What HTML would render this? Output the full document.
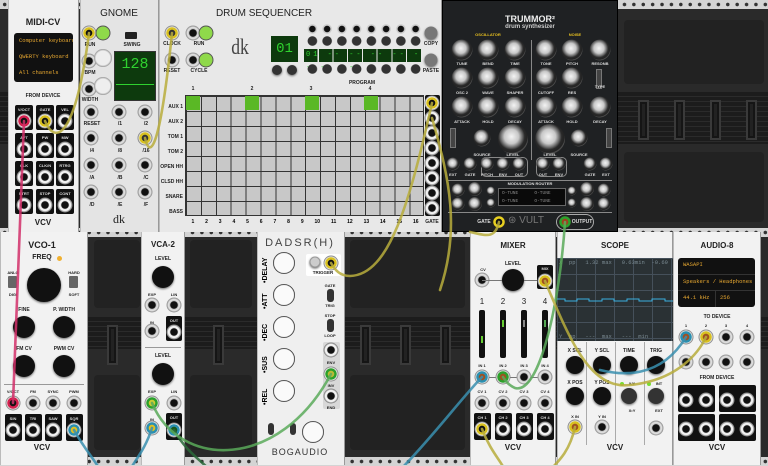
<!DOCTYPE html>
<html><head><meta charset="utf-8"><style>
*{box-sizing:border-box;margin:0;padding:0}
body{width:768px;height:465px;overflow:hidden;background:#2a2a2a;position:relative;font-family:"Liberation Sans",sans-serif}
.a{position:absolute}
.rail{position:absolute;left:0;width:768px;height:9px;background:#d4d4d4 radial-gradient(circle,#333 1.6px,transparent 2px) 0 0/9.4px 9px repeat-x}
.band{position:absolute;background:#1c1c1c repeating-linear-gradient(#1c1c1c 0 4px,#2b2b2b 4px 5px)}
.conn{position:absolute;width:11px;height:40px;background:#222;border:2px solid #3a3a3a;box-shadow:inset 0 0 0 2px #151515}
.p{position:absolute;background:#eeeeee;border-left:1px solid #bbb;border-right:1px solid #999}
.t{position:absolute;transform:translateX(-50%);white-space:nowrap;color:#222;text-align:center}
.j{position:absolute;width:15px;height:15px;border-radius:50%;background:radial-gradient(circle,#111 0 3.5px,#bbb 4px,#e8e8e8 5.5px,#999 7px);transform:translate(-50%,-50%)}
.jb{position:absolute;width:15px;height:15px;border-radius:50%;background:radial-gradient(circle,#111 0 3.5px,#ddd 4px,#fff 5.5px,#888 7px);transform:translate(-50%,-50%)}
.box{position:absolute;background:#111;border-radius:2px}
.kb{position:absolute;border-radius:50%;background:#111;box-shadow:0 1px 2px #666;transform:translate(-50%,-50%)}
.kw{position:absolute;border-radius:50%;background:radial-gradient(circle,#fafafa 0 62%,#333 68%,#111 100%);transform:translate(-50%,-50%)}
.kd{position:absolute;border-radius:50%;background:radial-gradient(circle at 45% 42%,#f4f4f4 0,#c8c8c8 30%,#666 46%,#2a2a2a 55%,#222 66%,#555 70%,#1a1a1a 76%);transform:translate(-50%,-50%)}
.gb{position:absolute;width:15px;height:15px;border-radius:50%;background:#8fd94a;border:1px solid #555;transform:translate(-50%,-50%)}
.s{font-size:5px;font-weight:bold}
.wl{color:#ddd}
</style></head><body>
<div class="rail" style="top:0"></div>
<div class="rail" style="top:228px"></div>
<div class="rail" style="top:457px"></div>
<div class="band" style="left:618px;top:92px;width:150px;height:52px"></div>
<div class="conn" style="left:638px;top:100px"></div><div class="conn" style="left:674px;top:100px"></div><div class="conn" style="left:710px;top:100px"></div><div class="conn" style="left:746px;top:100px"></div>
<div class="band" style="left:0;top:92px;width:8px;height:52px"></div>
<div class="band" style="left:88px;top:317px;width:682px;height:32px"></div>
<div class="conn" style="left:107px;top:325px"></div><div class="conn" style="left:213px;top:325px"></div><div class="conn" style="left:360px;top:325px"></div><div class="conn" style="left:400px;top:325px"></div><div class="conn" style="left:440px;top:325px"></div>
<div class="a" style="left:94px;top:240px;width:46px;height:68px;background:#222;border-radius:4px"></div>
<div class="a" style="left:94px;top:375px;width:46px;height:75px;background:#222;border-radius:4px"></div>
<div class="a" style="left:190px;top:240px;width:62px;height:68px;background:#222;border-radius:4px"></div>
<div class="a" style="left:190px;top:375px;width:62px;height:75px;background:#222;border-radius:4px"></div>
<div class="a" style="left:350px;top:240px;width:115px;height:68px;background:#222;border-radius:4px"></div>
<div class="a" style="left:350px;top:375px;width:115px;height:75px;background:#222;border-radius:4px"></div>
<div class="a" style="left:624px;top:20px;width:140px;height:64px;background:#222;border-radius:4px"></div>
<div class="a" style="left:624px;top:152px;width:140px;height:70px;background:#222;border-radius:4px"></div>

<!-- MIDI-CV -->
<div class="p" style="left:8px;top:0;width:71px;height:232px;background:#f0f0f0"></div>
<div class="t" style="left:43px;top:17px;font-size:9px;font-weight:bold">MIDI-CV</div>
<div class="a" style="left:14px;top:33px;width:59px;height:49px;background:#111;border-radius:3px;font-family:'Liberation Mono',monospace;font-size:5.5px;color:#e8a830;line-height:16px;padding-left:5px;overflow:hidden;white-space:nowrap">Computer keyboard<br>QWERTY keyboard<br>All channels</div>
<div class="t s" style="left:43px;top:93px">FROM DEVICE</div>
<div class="box" style="left:15px;top:105px;width:18px;height:25px"></div><div class="box" style="left:36px;top:105px;width:18px;height:25px"></div><div class="box" style="left:56px;top:105px;width:18px;height:25px"></div>
<div class="box" style="left:15px;top:133px;width:18px;height:25px"></div><div class="box" style="left:36px;top:133px;width:18px;height:25px"></div><div class="box" style="left:56px;top:133px;width:18px;height:25px"></div>
<div class="box" style="left:15px;top:161px;width:18px;height:25px"></div><div class="box" style="left:36px;top:161px;width:18px;height:25px"></div><div class="box" style="left:56px;top:161px;width:18px;height:25px"></div>
<div class="box" style="left:15px;top:189px;width:18px;height:25px"></div><div class="box" style="left:36px;top:189px;width:18px;height:25px"></div><div class="box" style="left:56px;top:189px;width:18px;height:25px"></div>
<div class="t s wl" style="left:24px;top:107px;font-size:4px">V/OCT</div><div class="t s wl" style="left:45px;top:107px;font-size:4px">GATE</div><div class="t s wl" style="left:65px;top:107px;font-size:4px">VEL</div>
<div class="t s wl" style="left:24px;top:135px;font-size:4px">AFT</div><div class="t s wl" style="left:45px;top:135px;font-size:4px">PW</div><div class="t s wl" style="left:65px;top:135px;font-size:4px">MW</div>
<div class="t s wl" style="left:24px;top:163px;font-size:4px">CLK</div><div class="t s wl" style="left:45px;top:163px;font-size:4px">CLK/N</div><div class="t s wl" style="left:65px;top:163px;font-size:4px">RTRG</div>
<div class="t s wl" style="left:24px;top:191px;font-size:4px">STRT</div><div class="t s wl" style="left:45px;top:191px;font-size:4px">STOP</div><div class="t s wl" style="left:65px;top:191px;font-size:4px">CONT</div>
<div class="jb" style="left:24px;top:121px;background:radial-gradient(circle,#111 0 3px,#d2204e 3.5px 5.5px,#fff 6px,#888 7px)"></div><div class="jb" style="left:45px;top:121px;background:radial-gradient(circle,#111 0 3px,#d8c020 3.5px 5.5px,#fff 6px,#888 7px)"></div><div class="jb" style="left:65px;top:121px"></div>
<div class="jb" style="left:24px;top:149px"></div><div class="jb" style="left:45px;top:149px"></div><div class="jb" style="left:65px;top:149px"></div>
<div class="jb" style="left:24px;top:177px"></div><div class="jb" style="left:45px;top:177px"></div><div class="jb" style="left:65px;top:177px"></div>
<div class="jb" style="left:24px;top:205px"></div><div class="jb" style="left:45px;top:205px"></div><div class="jb" style="left:65px;top:205px"></div>
<div class="t" style="left:43px;top:218px;font-size:8px;font-weight:bold">VCV</div>

<!-- GNOME -->
<div class="p" style="left:80px;top:0;width:79px;height:232px;background:#e4e4e4"></div>
<div class="t" style="left:119px;top:8px;font-size:10px">GNOME</div>
<div class="j" style="left:89px;top:33px;background:radial-gradient(circle,#111 0 3px,#d8c020 3.5px 5.5px,#eee 6px,#888 7px)"></div><div class="gb" style="left:103px;top:33px"></div>
<div class="t s" style="left:90px;top:42px">RUN</div>
<div class="a" style="left:125px;top:32px;width:12px;height:7px;background:#222;border-radius:1px"></div>
<div class="t s" style="left:132px;top:42px">SWING</div>
<div class="a" style="left:114px;top:51px;width:42px;height:50px;background:#0d3a0d;border:1px solid #333;color:#2fd22f;font-family:'Liberation Mono',monospace;font-size:15px;text-align:center;padding-top:4px">128</div>
<div class="a" style="left:116px;top:84px;width:38px;height:14px;border-top:1px solid #2fd22f"></div>
<div class="j" style="left:89px;top:61px"></div><div class="kw" style="left:103px;top:58px;width:18px;height:18px;background:radial-gradient(circle,#eee 0 55%,#999 70%,#555 100%)"></div>
<div class="t s" style="left:90px;top:70px">BPM</div>
<div class="j" style="left:89px;top:89px"></div><div class="kw" style="left:103px;top:86px;width:18px;height:18px;background:radial-gradient(circle,#eee 0 55%,#999 70%,#555 100%)"></div>
<div class="t s" style="left:90px;top:97px">WIDTH</div>
<div class="j" style="left:91px;top:112px"></div><div class="j" style="left:119px;top:112px"></div><div class="j" style="left:145px;top:112px"></div>
<div class="t s" style="left:92px;top:121px">RESET</div><div class="t s" style="left:120px;top:121px">/1</div><div class="t s" style="left:146px;top:121px">/2</div>
<div class="j" style="left:91px;top:138px"></div><div class="j" style="left:119px;top:138px"></div><div class="j" style="left:145px;top:138px;background:radial-gradient(circle,#333 0 3px,#d8c020 3.5px 5.5px,#eee 6px,#888 7px)"></div>
<div class="t s" style="left:92px;top:148px">/4</div><div class="t s" style="left:120px;top:148px">/8</div><div class="t s" style="left:146px;top:148px">/16</div>
<div class="j" style="left:91px;top:165px"></div><div class="j" style="left:119px;top:165px"></div><div class="j" style="left:145px;top:165px"></div>
<div class="t s" style="left:92px;top:175px">/A</div><div class="t s" style="left:120px;top:175px">/B</div><div class="t s" style="left:146px;top:175px">/C</div>
<div class="j" style="left:91px;top:192px"></div><div class="j" style="left:119px;top:192px"></div><div class="j" style="left:145px;top:192px"></div>
<div class="t s" style="left:92px;top:202px">/D</div><div class="t s" style="left:120px;top:202px">/E</div><div class="t s" style="left:146px;top:202px">/F</div>
<div class="t" style="left:119px;top:212px;font-size:12px;font-family:'Liberation Serif',serif">dk</div>

<!-- DRUM SEQUENCER -->
<div class="p" style="left:159px;top:0;width:283px;height:232px;background:#e8e8e8"></div>
<div class="t" style="left:264px;top:8px;font-size:10px">DRUM SEQUENCER</div>
<div class="j" style="left:172px;top:33px;background:radial-gradient(circle,#333 0 3px,#d8c020 3.5px 5.5px,#eee 6px,#888 7px)"></div><div class="t s" style="left:172px;top:41px">CLOCK</div>
<div class="j" style="left:193px;top:33px"></div><div class="gb" style="left:206px;top:33px"></div><div class="t s" style="left:199px;top:41px">RUN</div>
<div class="j" style="left:172px;top:60px"></div><div class="t s" style="left:172px;top:68px">RESET</div>
<div class="j" style="left:193px;top:60px"></div><div class="gb" style="left:206px;top:60px"></div><div class="t s" style="left:199px;top:68px">CYCLE</div>
<div class="t" style="left:240px;top:34px;font-size:22px;font-family:'Liberation Serif',serif;color:#444;transform:translateX(-50%) scaleX(0.8)">dk</div>
<div class="a" style="left:271px;top:36px;width:27px;height:26px;background:#0d3a0d;color:#2fd22f;font-family:'Liberation Mono',monospace;font-size:14px;text-align:center;line-height:26px">01</div>
<div class="kb" style="left:277px;top:70px;width:10px;height:10px;background:#333"></div><div class="kb" style="left:292px;top:70px;width:10px;height:10px;background:#333"></div>
<div class="a" style="left:304px;top:49px;width:118px;height:13px;background:repeating-linear-gradient(90deg,#0d3a0d 0 13.5px,#e8e8e8 13.5px 14.75px);color:#2fd22f;font-family:'Liberation Mono',monospace;font-size:7px;line-height:13px;letter-spacing:3px;padding-left:2px">01 -- -- -- -- -- -- --</div>
<div class="a" style="left:305px;top:24px;width:117px;height:10px;background:radial-gradient(circle,#111 0 3px,#ccc 3.5px 4.5px,transparent 5px) 0 0/14.75px 10px repeat-x"></div>
<div class="a" style="left:305px;top:36px;width:117px;height:10px;background:radial-gradient(circle,#333 0 4.5px,transparent 5px) 0 0/14.75px 10px repeat-x"></div>
<div class="a" style="left:305px;top:64px;width:117px;height:10px;background:radial-gradient(circle,#333 0 4.5px,transparent 5px) 0 0/14.75px 10px repeat-x"></div>
<div class="t s" style="left:362px;top:80px">PROGRAM</div>
<div class="kb" style="left:431px;top:33px;width:13px;height:13px;background:#777"></div><div class="t s" style="left:431px;top:41px">COPY</div>
<div class="kb" style="left:431px;top:60px;width:13px;height:13px;background:#777"></div><div class="t s" style="left:431px;top:68px">PASTE</div>
<div class="t s" style="left:193px;top:86px">1</div><div class="t s" style="left:252px;top:86px">2</div><div class="t s" style="left:311px;top:86px">3</div><div class="t s" style="left:370px;top:86px">4</div>
<div class="a" style="left:185px;top:95px;width:239px;height:121px;background:#c8c8c8;border:1px solid #333;background-image:repeating-linear-gradient(90deg,#333 0 1px,transparent 1px 14.9px),repeating-linear-gradient(#333 0 1px,transparent 1px 15px)"></div>
<div class="a" style="left:186px;top:96px;width:14px;height:14px;background:#5ab825"></div>
<div class="a" style="left:245px;top:96px;width:14px;height:14px;background:#5ab825"></div>
<div class="a" style="left:305px;top:96px;width:14px;height:14px;background:#5ab825"></div>
<div class="a" style="left:364px;top:96px;width:14px;height:14px;background:#5ab825"></div>
<div class="a s" style="left:160px;top:100px;width:23px;text-align:right;line-height:15px;font-size:5px;color:#222">AUX 1<br>AUX 2<br>TOM 1<br>TOM 2<br>OPEN HH<br>CLSD HH<br>SNARE<br>BASS</div>
<div class="a s" style="left:186px;top:219px;width:238px;display:flex;justify-content:space-around;font-size:5px"><span>1</span><span>2</span><span>3</span><span>4</span><span>5</span><span>6</span><span>7</span><span>8</span><span>9</span><span>10</span><span>11</span><span>12</span><span>13</span><span>14</span><span>15</span><span>16</span></div>
<div class="box" style="left:425px;top:95px;width:15px;height:121px"></div>
<div class="jb" style="left:432px;top:103px;background:radial-gradient(circle,#111 0 3px,#d8c020 3.5px 5.5px,#fff 6px,#888 7px)"></div>
<div class="jb" style="left:432px;top:118px"></div><div class="jb" style="left:432px;top:133px"></div><div class="jb" style="left:432px;top:148px"></div><div class="jb" style="left:432px;top:163px"></div><div class="jb" style="left:432px;top:178px"></div><div class="jb" style="left:432px;top:193px"></div><div class="jb" style="left:432px;top:208px"></div>
<div class="t s" style="left:432px;top:219px">GATE</div>

<!-- TRUMMOR -->
<div class="a" style="left:442px;top:0;width:176px;height:232px;background:#1f2123;border:1px solid #000"></div>
<div class="t" style="left:530px;top:14px;font-size:9px;font-weight:bold;color:#eee">TRUMMOR²</div>
<div class="t" style="left:530px;top:24px;font-size:6px;color:#ccc;font-weight:bold">drum synthesizer</div>
<div class="t s" style="left:488px;top:32px;color:#e8c020;font-size:4px">OSCILLATOR</div><div class="t s" style="left:575px;top:32px;color:#e8c020;font-size:4px">NOISE</div>
<div class="a" style="left:531px;top:40px;width:1px;height:120px;background:#888"></div>
<div class="kd" style="left:462px;top:50px;width:21px;height:21px"></div><div class="kd" style="left:488px;top:50px;width:21px;height:21px"></div><div class="kd" style="left:515px;top:50px;width:21px;height:21px"></div>
<div class="kd" style="left:546px;top:50px;width:21px;height:21px"></div><div class="kd" style="left:572px;top:50px;width:21px;height:21px"></div><div class="kd" style="left:600px;top:50px;width:21px;height:21px"></div>
<div class="kd" style="left:462px;top:78px;width:21px;height:21px"></div><div class="kd" style="left:488px;top:78px;width:21px;height:21px"></div><div class="kd" style="left:515px;top:78px;width:21px;height:21px"></div>
<div class="kd" style="left:546px;top:78px;width:21px;height:21px"></div><div class="kd" style="left:572px;top:78px;width:21px;height:21px"></div>
<div class="kd" style="left:462px;top:107px;width:21px;height:21px"></div><div class="kd" style="left:488px;top:107px;width:21px;height:21px"></div><div class="kd" style="left:515px;top:107px;width:21px;height:21px"></div>
<div class="kd" style="left:546px;top:107px;width:21px;height:21px"></div><div class="kd" style="left:572px;top:107px;width:21px;height:21px"></div><div class="kd" style="left:600px;top:107px;width:21px;height:21px"></div>
<div class="kd" style="left:482px;top:138px;width:17px;height:17px"></div><div class="kd" style="left:513px;top:139px;width:30px;height:30px"></div>
<div class="kd" style="left:550px;top:139px;width:30px;height:30px"></div><div class="kd" style="left:579px;top:138px;width:17px;height:17px"></div>
<div class="a" style="left:596px;top:69px;width:6px;height:20px;background:#444;border:1px solid #777"></div>
<div class="a" style="left:450px;top:128px;width:6px;height:20px;background:#444;border:1px solid #777"></div><div class="a" style="left:606px;top:128px;width:6px;height:20px;background:#444;border:1px solid #777"></div>
<div class="t s wl" style="left:462px;top:61px;font-size:4px">TUNE</div><div class="t s wl" style="left:488px;top:61px;font-size:4px">BEND</div><div class="t s wl" style="left:515px;top:61px;font-size:4px">TIME</div><div class="t s wl" style="left:546px;top:61px;font-size:4px">TONE</div><div class="t s wl" style="left:572px;top:61px;font-size:4px">PITCH</div><div class="t s wl" style="left:600px;top:61px;font-size:4px">RESONB</div>
<div class="t s wl" style="left:462px;top:90px;font-size:4px">OSC 2</div><div class="t s wl" style="left:488px;top:90px;font-size:4px">WAVE</div><div class="t s wl" style="left:515px;top:90px;font-size:4px">SHAPER</div><div class="t s wl" style="left:546px;top:90px;font-size:4px">CUTOFF</div><div class="t s wl" style="left:572px;top:90px;font-size:4px">RES</div><div class="t s wl" style="left:600px;top:84px;font-size:4px">TYPE</div>
<div class="t s wl" style="left:462px;top:119px;font-size:4px">ATTACK</div><div class="t s wl" style="left:488px;top:119px;font-size:4px">HOLD</div><div class="t s wl" style="left:515px;top:119px;font-size:4px">DECAY</div><div class="t s wl" style="left:546px;top:119px;font-size:4px">ATTACK</div><div class="t s wl" style="left:572px;top:119px;font-size:4px">HOLD</div><div class="t s wl" style="left:600px;top:119px;font-size:4px">DECAY</div>
<div class="t s wl" style="left:482px;top:152px;font-size:4px">SOURCE</div><div class="t s wl" style="left:513px;top:152px;font-size:4px">LEVEL</div><div class="t s wl" style="left:550px;top:152px;font-size:4px">LEVEL</div><div class="t s wl" style="left:579px;top:152px;font-size:4px">SOURCE</div>
<div class="a" style="left:481px;top:157px;width:47px;height:20px;border:1px solid #888;border-radius:5px"></div><div class="a" style="left:536px;top:157px;width:31px;height:20px;border:1px solid #888;border-radius:5px"></div>
<div class="kd" style="left:453px;top:164px;width:13px;height:13px"></div><div class="kd" style="left:470px;top:164px;width:13px;height:13px"></div><div class="kd" style="left:487px;top:164px;width:13px;height:13px"></div><div class="kd" style="left:503px;top:164px;width:13px;height:13px"></div><div class="kd" style="left:519px;top:164px;width:13px;height:13px"></div>
<div class="kd" style="left:543px;top:164px;width:13px;height:13px"></div><div class="kd" style="left:559px;top:164px;width:13px;height:13px"></div><div class="kd" style="left:590px;top:164px;width:13px;height:13px"></div><div class="kd" style="left:606px;top:164px;width:13px;height:13px"></div>
<div class="t s wl" style="left:453px;top:172px;font-size:4px">EXT</div><div class="t s wl" style="left:470px;top:172px;font-size:4px">GATE</div><div class="t s wl" style="left:487px;top:172px;font-size:4px">PITCH</div><div class="t s wl" style="left:503px;top:172px;font-size:4px">ENV</div><div class="t s wl" style="left:519px;top:172px;font-size:4px">OUT</div><div class="t s wl" style="left:543px;top:172px;font-size:4px">OUT</div><div class="t s wl" style="left:559px;top:172px;font-size:4px">ENV</div><div class="t s wl" style="left:590px;top:172px;font-size:4px">GATE</div><div class="t s wl" style="left:606px;top:172px;font-size:4px">EXT</div>
<div class="a" style="left:448px;top:180px;width:164px;height:1px;background:#888"></div>
<div class="t s wl" style="left:530px;top:181px;font-size:4px">MODULATION ROUTER</div>
<div class="a" style="left:498px;top:188px;width:68px;height:18px;background:#0a0a0a;border:1px solid #666;color:#888;font-family:'Liberation Mono',monospace;font-size:4.5px;line-height:8px;padding:1px 3px">O-TUNE&nbsp;&nbsp;&nbsp;&nbsp;&nbsp;&nbsp;O-TUNE<br>O-TUNE&nbsp;&nbsp;&nbsp;&nbsp;&nbsp;&nbsp;O-TUNE</div>
<div class="kd" style="left:458px;top:190px;width:13px;height:13px"></div><div class="kd" style="left:458px;top:204px;width:13px;height:13px"></div><div class="kd" style="left:475px;top:189px;width:14px;height:14px"></div><div class="kd" style="left:475px;top:204px;width:14px;height:14px"></div><div class="kd" style="left:491px;top:191px;width:9px;height:9px"></div><div class="kd" style="left:491px;top:203px;width:9px;height:9px"></div>
<div class="kd" style="left:572px;top:191px;width:9px;height:9px"></div><div class="kd" style="left:572px;top:203px;width:9px;height:9px"></div><div class="kd" style="left:587px;top:189px;width:14px;height:14px"></div><div class="kd" style="left:587px;top:204px;width:14px;height:14px"></div><div class="kd" style="left:604px;top:190px;width:13px;height:13px"></div><div class="kd" style="left:604px;top:204px;width:13px;height:13px"></div>
<div class="a" style="left:448px;top:212px;width:164px;height:1px;background:#888"></div>
<div class="t s wl" style="left:484px;top:219px">GATE</div>
<div class="j" style="left:499px;top:222px;background:radial-gradient(circle,#111 0 3px,#e8d020 3.5px 5.5px,#222 6px)"></div>
<div class="t" style="left:526px;top:215px;font-size:10px;color:#777">⊛ VULT</div>
<div class="a" style="left:556px;top:214px;width:38px;height:16px;border:1px solid #aaa;border-radius:8px"></div>
<div class="j" style="left:565px;top:222px;background:radial-gradient(circle,#a04020 0 3px,#2ca02c 3.5px 5.5px,#222 6px)"></div>
<div class="t s wl" style="left:582px;top:219px">OUTPUT</div>

<!-- VCO-1 -->
<div class="p" style="left:0;top:232px;width:88px;height:233px;background:#f2f2f2"></div>
<div class="t" style="left:42px;top:240px;font-size:9px;font-weight:bold">VCO-1</div>
<div class="t" style="left:42px;top:254px;font-size:7px;font-weight:bold">FREQ</div><div class="a" style="left:57px;top:256px;width:5px;height:5px;border-radius:50%;background:#f0b030"></div>
<div class="kb" style="left:44px;top:285px;width:34px;height:34px"></div>
<div class="a" style="left:8px;top:276px;width:9px;height:12px;background:#666;border-radius:1px"></div><div class="a" style="left:69px;top:276px;width:9px;height:12px;background:#666;border-radius:1px"></div>
<div class="t s" style="left:13px;top:270px;font-size:4px">ANLG</div><div class="t s" style="left:13px;top:292px;font-size:4px">DIGI</div><div class="t s" style="left:74px;top:270px;font-size:4px">HARD</div><div class="t s" style="left:74px;top:292px;font-size:4px">SOFT</div>
<div class="t s" style="left:24px;top:307px">FINE</div><div class="t s" style="left:64px;top:307px">P. WIDTH</div>
<div class="kb" style="left:24px;top:327px;width:22px;height:22px"></div><div class="kb" style="left:64px;top:327px;width:22px;height:22px"></div>
<div class="t s" style="left:24px;top:346px">FM CV</div><div class="t s" style="left:64px;top:346px">PWM CV</div>
<div class="kb" style="left:24px;top:366px;width:22px;height:22px"></div><div class="kb" style="left:64px;top:366px;width:22px;height:22px"></div>
<div class="a" style="left:4px;top:384px;width:80px;height:1px;background:#999"></div>
<div class="t s" style="left:13px;top:389px;font-size:4px">V/OCT</div><div class="t s" style="left:33px;top:389px;font-size:4px">FM</div><div class="t s" style="left:53px;top:389px;font-size:4px">SYNC</div><div class="t s" style="left:74px;top:389px;font-size:4px">PWM</div>
<div class="j" style="left:13px;top:403px;background:radial-gradient(circle,#111 0 3px,#d2204e 3.5px 5.5px,#eee 6px,#888 7px)"></div><div class="j" style="left:33px;top:403px"></div><div class="j" style="left:53px;top:403px"></div><div class="j" style="left:74px;top:403px"></div>
<div class="box" style="left:5px;top:414px;width:17px;height:27px"></div><div class="box" style="left:25px;top:414px;width:17px;height:27px"></div><div class="box" style="left:45px;top:414px;width:17px;height:27px"></div><div class="box" style="left:66px;top:414px;width:17px;height:27px"></div>
<div class="t s wl" style="left:13px;top:416px;font-size:4px">SIN</div><div class="t s wl" style="left:33px;top:416px;font-size:4px">TRI</div><div class="t s wl" style="left:53px;top:416px;font-size:4px">SAW</div><div class="t s wl" style="left:74px;top:416px;font-size:4px">SQR</div>
<div class="jb" style="left:13px;top:430px"></div><div class="jb" style="left:33px;top:430px"></div><div class="jb" style="left:53px;top:430px"></div><div class="jb" style="left:74px;top:430px;background:radial-gradient(circle,#e0c020 0 3px,#2a8fb0 3.5px 5.5px,#fff 6px,#888 7px)"></div>
<div class="t" style="left:42px;top:443px;font-size:8px;font-weight:bold">VCV</div>

<!-- VCA-2 -->
<div class="p" style="left:141px;top:232px;width:44px;height:233px;background:#f2f2f2"></div>
<div class="t" style="left:163px;top:240px;font-size:8px;font-weight:bold">VCA-2</div>
<div class="t s" style="left:163px;top:256px">LEVEL</div><div class="kb" style="left:163px;top:277px;width:22px;height:22px"></div>
<div class="t s" style="left:152px;top:292px;font-size:4px">EXP</div><div class="t s" style="left:174px;top:292px;font-size:4px">LIN</div>
<div class="j" style="left:152px;top:305px"></div><div class="j" style="left:174px;top:305px"></div>
<div class="t s" style="left:152px;top:320px;font-size:4px">IN</div><div class="j" style="left:152px;top:331px"></div>
<div class="box" style="left:166px;top:316px;width:16px;height:25px"></div><div class="t s wl" style="left:174px;top:318px;font-size:4px">OUT</div><div class="jb" style="left:174px;top:332px"></div>
<div class="a" style="left:145px;top:347px;width:36px;height:1px;background:#999"></div>
<div class="t s" style="left:163px;top:353px">LEVEL</div><div class="kb" style="left:163px;top:374px;width:22px;height:22px"></div>
<div class="t s" style="left:152px;top:389px;font-size:4px">EXP</div><div class="t s" style="left:174px;top:389px;font-size:4px">LIN</div>
<div class="j" style="left:152px;top:403px;background:radial-gradient(circle,#cc3 0 3px,#2ca02c 3.5px 5.5px,#eee 6px,#888 7px)"></div><div class="j" style="left:174px;top:403px"></div>
<div class="t s" style="left:152px;top:417px;font-size:4px">IN</div><div class="j" style="left:152px;top:428px;background:radial-gradient(circle,#e0c020 0 3px,#2a8fb0 3.5px 5.5px,#eee 6px,#888 7px)"></div>
<div class="box" style="left:166px;top:413px;width:16px;height:27px"></div><div class="t s wl" style="left:174px;top:415px;font-size:4px">OUT</div><div class="jb" style="left:174px;top:430px;background:radial-gradient(circle,#1a5a1a 0 3px,#2a8fb0 3.5px 5.5px,#fff 6px,#888 7px)"></div>

<!-- DADSR(H) -->
<div class="p" style="left:257px;top:232px;width:88px;height:233px;background:#efefef"></div>
<div class="t" style="left:300px;top:237px;font-size:11px;letter-spacing:2px;color:#444">DADSR(H)</div>
<div class="kw" style="left:284px;top:263px;width:22px;height:22px"></div><div class="kw" style="left:284px;top:295px;width:22px;height:22px"></div><div class="kw" style="left:284px;top:327px;width:22px;height:22px"></div><div class="kw" style="left:284px;top:359px;width:22px;height:22px"></div><div class="kw" style="left:284px;top:391px;width:22px;height:22px"></div>
<div class="a s" style="left:262px;top:283px;font-size:7px;transform:rotate(-90deg);transform-origin:0 0">•DELAY</div>
<div class="a s" style="left:262px;top:309px;font-size:7px;transform:rotate(-90deg);transform-origin:0 0">•ATT</div>
<div class="a s" style="left:262px;top:341px;font-size:7px;transform:rotate(-90deg);transform-origin:0 0">•DEC</div>
<div class="a s" style="left:262px;top:373px;font-size:7px;transform:rotate(-90deg);transform-origin:0 0">•SUS</div>
<div class="a s" style="left:262px;top:405px;font-size:7px;transform:rotate(-90deg);transform-origin:0 0">•REL</div>
<div class="a" style="left:306px;top:254px;width:35px;height:22px;background:#fff;border-radius:2px"></div>
<div class="kb" style="left:315px;top:262px;width:11px;height:11px;background:#ccc;border:1px solid #999"></div>
<div class="j" style="left:331px;top:263px;background:radial-gradient(circle,#111 0 3px,#d8c020 3.5px 5.5px,#eee 6px,#888 7px)"></div>
<div class="t s" style="left:323px;top:270px;font-size:4.5px">TRIGGER</div>
<div class="a" style="left:327px;top:289px;width:7px;height:13px;background:#333;border-radius:3px"></div><div class="a" style="left:327px;top:319px;width:7px;height:13px;background:#333;border-radius:3px"></div>
<div class="t s" style="left:330px;top:283px;font-size:4px">GATE</div><div class="t s" style="left:330px;top:303px;font-size:4px">TRIG</div><div class="t s" style="left:330px;top:313px;font-size:4px">STOP</div><div class="t s" style="left:330px;top:333px;font-size:4px">LOOP</div>
<div class="a" style="left:323px;top:342px;width:17px;height:67px;background:#d8d8d8;border-radius:2px"></div>
<div class="jb" style="left:331px;top:350px"></div><div class="jb" style="left:331px;top:374px;background:radial-gradient(circle,#bb3 0 3px,#2ca02c 3.5px 5.5px,#fff 6px,#888 7px)"></div><div class="jb" style="left:331px;top:396px"></div>
<div class="t s" style="left:331px;top:360px;font-size:4px">ENV</div><div class="t s" style="left:331px;top:383px;font-size:4px">INV</div><div class="t s" style="left:331px;top:405px;font-size:4px">END</div>
<div class="a" style="left:268px;top:423px;width:6px;height:12px;background:#333;border-radius:3px"></div><div class="a" style="left:290px;top:423px;width:6px;height:12px;background:#333;border-radius:3px"></div>
<div class="kw" style="left:313px;top:432px;width:22px;height:22px"></div>
<div class="t" style="left:300px;top:447px;font-size:9px;letter-spacing:1px;color:#333">BOGAUDIO</div>

<!-- MIXER -->
<div class="p" style="left:470px;top:232px;width:86px;height:233px;background:#f2f2f2"></div>
<div class="t" style="left:513px;top:241px;font-size:8px;font-weight:bold">MIXER</div>
<div class="t s" style="left:483px;top:267px;font-size:4px">CV</div><div class="t s" style="left:513px;top:261px">LEVEL</div>
<div class="j" style="left:482px;top:280px"></div><div class="a" style="left:482px;top:280px;width:63px;height:1px;background:#777"></div>
<div class="kb" style="left:513px;top:280px;width:22px;height:22px"></div>
<div class="box" style="left:537px;top:265px;width:16px;height:24px"></div><div class="t s wl" style="left:545px;top:266px;font-size:4px">MIX</div><div class="jb" style="left:545px;top:281px;background:radial-gradient(circle,#a05020 0 3px,#d8c020 3.5px 5.5px,#fff 6px,#888 7px)"></div>
<div class="t" style="left:482px;top:297px;font-size:8px">1</div><div class="t" style="left:503px;top:297px;font-size:8px">2</div><div class="t" style="left:524px;top:297px;font-size:8px">3</div><div class="t" style="left:545px;top:297px;font-size:8px">4</div>
<div class="box" style="left:479px;top:310px;width:6px;height:48px"></div><div class="box" style="left:500px;top:310px;width:6px;height:48px"></div><div class="box" style="left:521px;top:310px;width:6px;height:48px"></div><div class="box" style="left:542px;top:310px;width:6px;height:48px"></div>
<div class="a" style="left:481px;top:336px;width:2px;height:7px;background:#6c3"></div><div class="a" style="left:502px;top:320px;width:2px;height:7px;background:#6c3"></div><div class="a" style="left:523px;top:320px;width:2px;height:7px;background:#888"></div><div class="a" style="left:544px;top:320px;width:2px;height:7px;background:#5a5"></div>
<div class="t s" style="left:482px;top:363px;font-size:4px">IN 1</div><div class="t s" style="left:503px;top:363px;font-size:4px">IN 2</div><div class="t s" style="left:524px;top:363px;font-size:4px">IN 3</div><div class="t s" style="left:545px;top:363px;font-size:4px">IN 4</div>
<div class="a" style="left:482px;top:377px;width:63px;height:1px;background:#777"></div>
<div class="j" style="left:482px;top:377px;background:radial-gradient(circle,#a05020 0 3px,#2a8fb0 3.5px 5.5px,#eee 6px,#888 7px)"></div><div class="j" style="left:503px;top:377px;background:radial-gradient(circle,#a05020 0 3px,#2ca02c 3.5px 5.5px,#eee 6px,#888 7px)"></div><div class="j" style="left:524px;top:377px"></div><div class="j" style="left:545px;top:377px"></div>
<div class="t s" style="left:482px;top:389px;font-size:4px">CV 1</div><div class="t s" style="left:503px;top:389px;font-size:4px">CV 2</div><div class="t s" style="left:524px;top:389px;font-size:4px">CV 3</div><div class="t s" style="left:545px;top:389px;font-size:4px">CV 4</div>
<div class="j" style="left:482px;top:403px"></div><div class="j" style="left:503px;top:403px"></div><div class="j" style="left:524px;top:403px"></div><div class="j" style="left:545px;top:403px"></div>
<div class="box" style="left:474px;top:413px;width:17px;height:27px"></div><div class="box" style="left:495px;top:413px;width:17px;height:27px"></div><div class="box" style="left:516px;top:413px;width:17px;height:27px"></div><div class="box" style="left:537px;top:413px;width:17px;height:27px"></div>
<div class="t s wl" style="left:482px;top:415px;font-size:4px">CH 1</div><div class="t s wl" style="left:503px;top:415px;font-size:4px">CH 2</div><div class="t s wl" style="left:524px;top:415px;font-size:4px">CH 3</div><div class="t s wl" style="left:545px;top:415px;font-size:4px">CH 4</div>
<div class="jb" style="left:482px;top:429px;background:radial-gradient(circle,#111 0 3px,#d8c020 3.5px 5.5px,#fff 6px,#888 7px)"></div><div class="jb" style="left:503px;top:429px"></div><div class="jb" style="left:524px;top:429px"></div><div class="jb" style="left:545px;top:429px"></div>
<div class="t" style="left:513px;top:443px;font-size:8px;font-weight:bold">VCV</div>

<!-- SCOPE -->
<div class="p" style="left:557px;top:232px;width:116px;height:233px;background:#f2f2f2"></div>
<div class="t" style="left:615px;top:241px;font-size:8px;font-weight:bold">SCOPE</div>
<div class="a" style="left:557px;top:258px;width:116px;height:83px;background:#2a3134;background-image:repeating-linear-gradient(90deg,#45505a 0 1px,transparent 1px 19px),repeating-linear-gradient(#45505a 0 1px,transparent 1px 16px)"></div>
<div class="a" style="left:559px;top:259px;font-size:5.5px;color:#7a8a92;font-family:'Liberation Mono',monospace;white-space:nowrap">X&nbsp; pp&nbsp;&nbsp; 1.32 max&nbsp;&nbsp; 0.63min&nbsp; -0.69</div>
<div class="a" style="left:559px;top:333px;font-size:5.5px;color:#7a8a92;font-family:'Liberation Mono',monospace;white-space:nowrap">Y&nbsp; pp&nbsp;&nbsp; ---&nbsp; max&nbsp;&nbsp; ---&nbsp; min</div>
<svg class="a" style="left:557px;top:290px" width="116" height="20"><polyline fill="none" stroke="#3ab0e0" stroke-width="1" points="0,9 8,9 8,11 20,11 20,9 32,9 32,11 45,11 45,9 57,9 57,11 70,11 70,9 82,9 82,11 95,11 95,9 108,9 108,11 116,11"/></svg>
<div class="a" style="left:586px;top:342px;width:1px;height:103px;background:#aaa"></div><div class="a" style="left:615px;top:342px;width:1px;height:103px;background:#aaa"></div><div class="a" style="left:644px;top:342px;width:1px;height:103px;background:#aaa"></div>
<div class="t s" style="left:575px;top:348px">X SCL</div><div class="t s" style="left:602px;top:348px">Y SCL</div><div class="t s" style="left:629px;top:348px">TIME</div><div class="t s" style="left:656px;top:348px">TRIG</div>
<div class="kb" style="left:575px;top:365px;width:18px;height:18px"></div><div class="kb" style="left:602px;top:365px;width:18px;height:18px"></div><div class="kb" style="left:629px;top:365px;width:18px;height:18px"></div><div class="kb" style="left:656px;top:365px;width:18px;height:18px"></div>
<div class="t s" style="left:575px;top:380px">X POS</div><div class="t s" style="left:602px;top:380px">Y POS</div><div class="t s" style="left:632px;top:381px;font-size:4px">X/Y</div><div class="t s" style="left:659px;top:381px;font-size:4px">INT</div>
<div class="a" style="left:620px;top:382px;width:4px;height:4px;border-radius:50%;background:#7d3"></div><div class="a" style="left:647px;top:382px;width:4px;height:4px;border-radius:50%;background:#7d3"></div>
<div class="kb" style="left:575px;top:396px;width:18px;height:18px"></div><div class="kb" style="left:602px;top:396px;width:18px;height:18px"></div><div class="kb" style="left:629px;top:396px;width:16px;height:16px;background:#333"></div><div class="kb" style="left:656px;top:396px;width:16px;height:16px;background:#333"></div>
<div class="t s" style="left:632px;top:408px;font-size:4px">X•Y</div><div class="t s" style="left:659px;top:408px;font-size:4px">EXT</div>
<div class="t s" style="left:575px;top:414px;font-size:4px">X IN</div><div class="t s" style="left:602px;top:414px;font-size:4px">Y IN</div>
<div class="j" style="left:575px;top:427px;background:radial-gradient(circle,#a05020 0 3px,#d8c020 3.5px 5.5px,#eee 6px,#888 7px)"></div><div class="j" style="left:602px;top:427px"></div><div class="j" style="left:656px;top:428px"></div>
<div class="t" style="left:615px;top:443px;font-size:8px;font-weight:bold">VCV</div>

<!-- AUDIO-8 -->
<div class="p" style="left:673px;top:232px;width:88px;height:233px;background:#f2f2f2"></div>
<div class="t" style="left:717px;top:241px;font-size:8px;font-weight:bold">AUDIO-8</div>
<div class="a" style="left:678px;top:258px;width:77px;height:49px;background:#111;border-radius:3px;font-family:'Liberation Mono',monospace;font-size:5.5px;color:#e8a830;overflow:hidden;white-space:nowrap">
<div style="position:absolute;left:5px;top:3px">WASAPI</div>
<div style="position:absolute;left:0;top:16px;width:77px;height:1px;background:#333"></div>
<div style="position:absolute;left:5px;top:20px">Speakers / Headphones</div>
<div style="position:absolute;left:0;top:32px;width:77px;height:1px;background:#333"></div>
<div style="position:absolute;left:5px;top:36px">44.1 kHz</div><div style="position:absolute;left:37px;top:33px;width:1px;height:16px;background:#333"></div><div style="position:absolute;left:42px;top:36px">256</div></div>
<div class="t s" style="left:717px;top:314px">TO DEVICE</div>
<div class="t s" style="left:686px;top:323px;font-size:4px">1</div><div class="t s" style="left:706px;top:323px;font-size:4px">2</div><div class="t s" style="left:726px;top:323px;font-size:4px">3</div><div class="t s" style="left:747px;top:323px;font-size:4px">4</div>
<div class="j" style="left:686px;top:337px;background:radial-gradient(circle,#a05020 0 3px,#2a8fb0 3.5px 5.5px,#eee 6px,#888 7px)"></div><div class="j" style="left:706px;top:337px;background:radial-gradient(circle,#a05020 0 3px,#d8c020 3.5px 5.5px,#eee 6px,#888 7px)"></div><div class="j" style="left:726px;top:337px"></div><div class="j" style="left:747px;top:337px"></div>
<div class="j" style="left:686px;top:362px"></div><div class="j" style="left:706px;top:362px"></div><div class="j" style="left:726px;top:362px"></div><div class="j" style="left:747px;top:362px"></div>
<div class="t s" style="left:717px;top:375px">FROM DEVICE</div>
<div class="box" style="left:678px;top:385px;width:37px;height:27px"></div><div class="box" style="left:719px;top:385px;width:37px;height:27px"></div><div class="box" style="left:678px;top:414px;width:37px;height:27px"></div><div class="box" style="left:719px;top:414px;width:37px;height:27px"></div>
<div class="jb" style="left:686px;top:400px"></div><div class="jb" style="left:706px;top:400px"></div><div class="jb" style="left:727px;top:400px"></div><div class="jb" style="left:747px;top:400px"></div>
<div class="jb" style="left:686px;top:429px"></div><div class="jb" style="left:706px;top:429px"></div><div class="jb" style="left:727px;top:429px"></div><div class="jb" style="left:747px;top:429px"></div>
<div class="t" style="left:717px;top:443px;font-size:8px;font-weight:bold">VCV</div>

<svg class="a" style="left:0;top:0" width="768" height="465" fill="none" stroke-linecap="round">
<g stroke-width="2.6" opacity="0.85">
<path d="M24 121 L13 403" stroke="#d2306a"/>
<path d="M45 121 C55 145 75 140 89 33" stroke="#b8ad3c"/>
<path d="M145 138 C150 160 160 150 172 33" stroke="#b8ad3c"/>
<path d="M432 103 C410 200 390 275 350 276 C340 276 335 270 331 263" stroke="#b8ad3c"/>
<path d="M432 118 C450 180 460 230 440 290" stroke="#b8ad3c"/>
<path d="M499 222 C495 240 485 235 470 232" stroke="#b8ad3c"/>
<path d="M565 222 C560 300 540 395 515 388 C508 385 505 380 503 377" stroke="#5aaa5a"/>
<path d="M545 281 C570 340 590 390 630 385 C680 380 700 350 706 337" stroke="#b8ad3c"/>
<path d="M686 337 C660 380 620 375 600 370" stroke="#3a90b0"/>
<path d="M482 377 C460 400 430 440 400 470" stroke="#3a90b0"/>
<path d="M482 429 C490 450 500 460 505 470" stroke="#b8ad3c"/>
<path d="M575 427 C570 450 560 460 550 470" stroke="#b8ad3c"/>
<path d="M74 430 C85 450 95 460 100 470" stroke="#3a90b0"/>
<path d="M152 428 C145 450 135 460 130 470" stroke="#3a90b0"/>
<path d="M174 430 C185 450 200 460 210 470" stroke="#2a6a3a"/>
<path d="M152 403 C180 470 280 470 331 374" stroke="#5aaa5a"/>
</g></svg>
</body></html>
